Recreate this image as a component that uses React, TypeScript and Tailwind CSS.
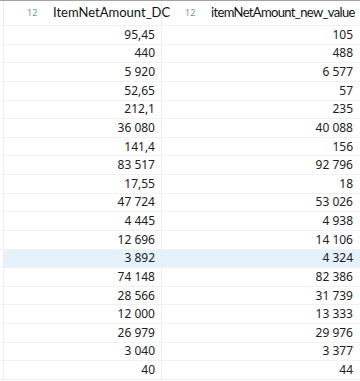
import React from "react";

const rows: [string, string][] = [
  ["95,45", "105"],
  ["440", "488"],
  ["5 920", "6 577"],
  ["52,65", "57"],
  ["212,1", "235"],
  ["36 080", "40 088"],
  ["141,4", "156"],
  ["83 517", "92 796"],
  ["17,55", "18"],
  ["47 724", "53 026"],
  ["4 445", "4 938"],
  ["12 696", "14 106"],
  ["3 892", "4 324"],
  ["74 148", "82 386"],
  ["28 566", "31 739"],
  ["12 000", "13 333"],
  ["26 979", "29 976"],
  ["3 040", "3 377"],
  ["40", "44"],
];

function Header({ label, tight }: { label: string; tight?: boolean }) {
  return (
    <div className="flex items-center h-full">
      <span className="w-[23px] shrink-0" />
      <span
        className="w-[26px] shrink-0 text-[9px] text-[#6f95b3]"
        style={{ fontFamily: '"Noto Sans", sans-serif' }}
      >
        12
      </span>
      <span
        className={`text-[13px] text-[#111] whitespace-nowrap ${tight ? "tracking-[-0.65px]" : ""}`}
        style={{ fontFamily: 'Lato, "Noto Sans", sans-serif' }}
      >
        {label}
      </span>
    </div>
  );
}

export default function App() {
  return (
    <div
      className="w-[360px] h-[381px] bg-white overflow-hidden"
      style={{ fontFamily: '"Noto Sans", "Open Sans", sans-serif' }}
    >
      <div className="border-t border-[#a3a3a3] flex flex-col">
        <div className="flex h-[25px] border-b border-[#eef1f5]">
          <div className="w-[3px] shrink-0" />
          <div className="w-[159px] shrink-0 border-l border-[#e3e9ef] border-r border-[#e6eaee]">
            <Header label="ItemNetAmount_DC" />
          </div>
          <div className="flex-1">
            <Header label="itemNetAmount_new_value" tight />
          </div>
        </div>
        {rows.map(([a, b], i) => (
          <div
            key={i}
            className={`flex h-[18.63px] border-b border-[#eef1f5] text-[12px] text-[#222] ${
              i === 12 ? "bg-[#e5f1fb]" : ""
            }`}
          >
            <div className="w-[3px] shrink-0 bg-white" />
            <div className="w-[159px] shrink-0 border-l border-[#e3e9ef] border-r border-[#eaeef2] flex items-center justify-end pr-[6px]">
              {a}
            </div>
            <div className="flex-1 flex items-center justify-end pr-[7px]">{b}</div>
          </div>
        ))}
      </div>
    </div>
  );
}
